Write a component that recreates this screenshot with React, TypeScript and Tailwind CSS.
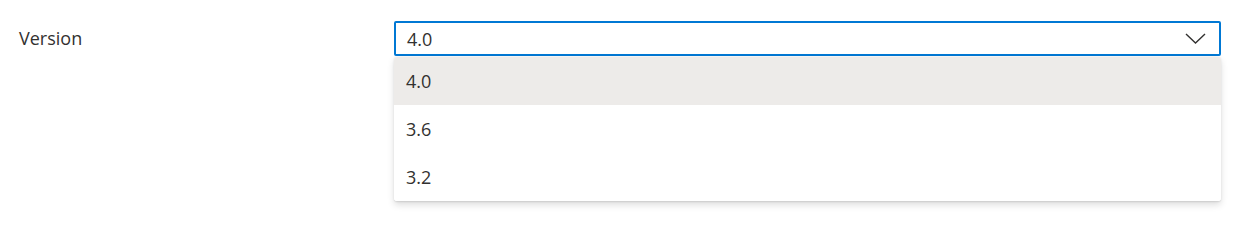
import React from "react";

export default function App() {
  const options = ["4.0", "3.6", "3.2"];
  return (
    <div
      className="w-[1243px] h-[241px] bg-white text-[#323130] text-[18px]"
      style={{ fontFamily: '"Open Sans", "Noto Sans", sans-serif' }}
    >
      <div className="flex pt-[21px] pl-[19px]">
        <div className="w-[375px] h-[35px] flex items-center">Version</div>
        <div className="relative w-[827px]">
          <div className="h-[35px] border-2 border-[#0078d4] rounded-[2px] flex items-center justify-between pl-[11px] pr-[13px]">
            <span className="leading-none">4.0</span>
            <svg width="21" height="11" viewBox="0 0 21 11" fill="none">
              <path d="M1 1 L10.5 10 L20 1" stroke="#323130" strokeWidth="1.4" />
            </svg>
          </div>
          <div className="absolute left-0 top-[36px] w-full bg-white rounded-[3px] shadow-[0_3.2px_7.2px_rgba(0,0,0,0.13),0_0.6px_1.8px_rgba(0,0,0,0.11)] overflow-hidden">
            {options.map((o, i) => (
              <div
                key={o}
                className={
                  "h-[48px] flex items-center pl-[12px] " +
                  (i === 0 ? "bg-[#edebe9]" : "bg-white")
                }
              >
                {o}
              </div>
            ))}
          </div>
        </div>
      </div>
    </div>
  );
}
